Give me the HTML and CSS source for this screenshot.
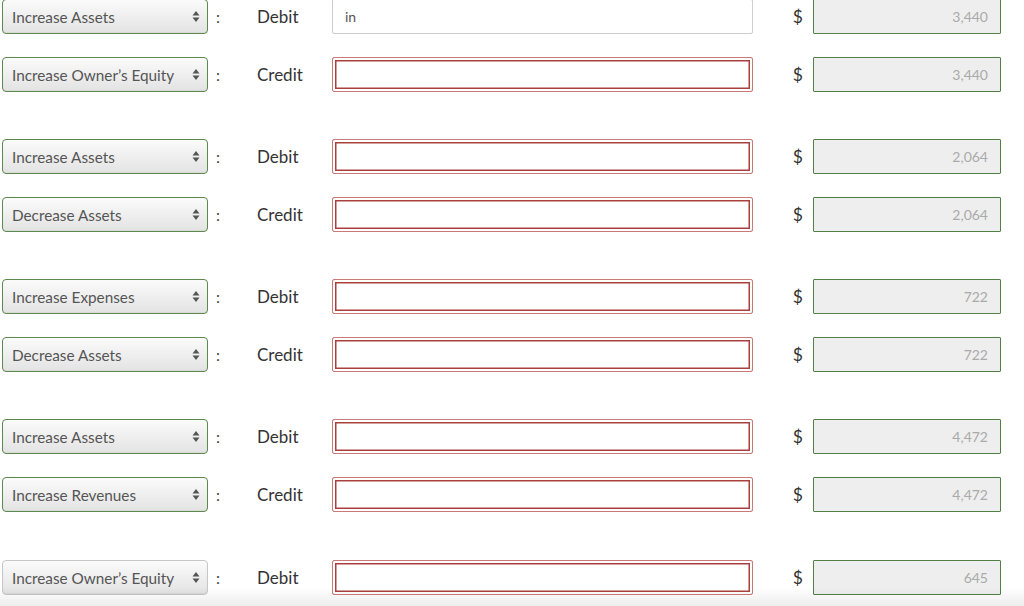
FILE: index.html
```html
<!DOCTYPE html>
<html>
<head>
<meta charset="utf-8">
<link rel="stylesheet" href="styles.css">
</head>
<body>
<div class="sheet">
  <div class="group">
    <div class="row">
      <div class="sel"><span>Increase Assets</span><svg class="arr" width="8" height="13" viewBox="0 0 8 13"><path d="M4 1 L7.5 5.5 H0.5 Z M4 12 L7.5 7.5 H0.5 Z" fill="#555"/></svg></div>
      <div class="colon">:</div>
      <div class="lbl">Debit</div>
      <div class="inp plain">in</div>
      <div class="cur">$</div>
      <div class="amt">3,440</div>
    </div>
    <div class="row">
      <div class="sel"><span>Increase Owner’s Equity</span><svg class="arr" width="8" height="13" viewBox="0 0 8 13"><path d="M4 1 L7.5 5.5 H0.5 Z M4 12 L7.5 7.5 H0.5 Z" fill="#555"/></svg></div>
      <div class="colon">:</div>
      <div class="lbl">Credit</div>
      <div class="inp err"></div>
      <div class="cur">$</div>
      <div class="amt">3,440</div>
    </div>
  </div>
  <div class="group">
    <div class="row">
      <div class="sel"><span>Increase Assets</span><svg class="arr" width="8" height="13" viewBox="0 0 8 13"><path d="M4 1 L7.5 5.5 H0.5 Z M4 12 L7.5 7.5 H0.5 Z" fill="#555"/></svg></div>
      <div class="colon">:</div>
      <div class="lbl">Debit</div>
      <div class="inp err"></div>
      <div class="cur">$</div>
      <div class="amt">2,064</div>
    </div>
    <div class="row">
      <div class="sel"><span>Decrease Assets</span><svg class="arr" width="8" height="13" viewBox="0 0 8 13"><path d="M4 1 L7.5 5.5 H0.5 Z M4 12 L7.5 7.5 H0.5 Z" fill="#555"/></svg></div>
      <div class="colon">:</div>
      <div class="lbl">Credit</div>
      <div class="inp err"></div>
      <div class="cur">$</div>
      <div class="amt">2,064</div>
    </div>
  </div>
  <div class="group">
    <div class="row">
      <div class="sel"><span>Increase Expenses</span><svg class="arr" width="8" height="13" viewBox="0 0 8 13"><path d="M4 1 L7.5 5.5 H0.5 Z M4 12 L7.5 7.5 H0.5 Z" fill="#555"/></svg></div>
      <div class="colon">:</div>
      <div class="lbl">Debit</div>
      <div class="inp err"></div>
      <div class="cur">$</div>
      <div class="amt">722</div>
    </div>
    <div class="row">
      <div class="sel"><span>Decrease Assets</span><svg class="arr" width="8" height="13" viewBox="0 0 8 13"><path d="M4 1 L7.5 5.5 H0.5 Z M4 12 L7.5 7.5 H0.5 Z" fill="#555"/></svg></div>
      <div class="colon">:</div>
      <div class="lbl">Credit</div>
      <div class="inp err"></div>
      <div class="cur">$</div>
      <div class="amt">722</div>
    </div>
  </div>
  <div class="group">
    <div class="row">
      <div class="sel"><span>Increase Assets</span><svg class="arr" width="8" height="13" viewBox="0 0 8 13"><path d="M4 1 L7.5 5.5 H0.5 Z M4 12 L7.5 7.5 H0.5 Z" fill="#555"/></svg></div>
      <div class="colon">:</div>
      <div class="lbl">Debit</div>
      <div class="inp err"></div>
      <div class="cur">$</div>
      <div class="amt">4,472</div>
    </div>
    <div class="row">
      <div class="sel"><span>Increase Revenues</span><svg class="arr" width="8" height="13" viewBox="0 0 8 13"><path d="M4 1 L7.5 5.5 H0.5 Z M4 12 L7.5 7.5 H0.5 Z" fill="#555"/></svg></div>
      <div class="colon">:</div>
      <div class="lbl">Credit</div>
      <div class="inp err"></div>
      <div class="cur">$</div>
      <div class="amt">4,472</div>
    </div>
  </div>
  <div class="group last">
    <div class="row">
      <div class="sel neutral"><span>Increase Owner’s Equity</span><svg class="arr" width="8" height="13" viewBox="0 0 8 13"><path d="M4 1 L7.5 5.5 H0.5 Z M4 12 L7.5 7.5 H0.5 Z" fill="#555"/></svg></div>
      <div class="colon">:</div>
      <div class="lbl">Debit</div>
      <div class="inp err"></div>
      <div class="cur">$</div>
      <div class="amt">645</div>
    </div>
  </div>
</div>
<div class="fade"></div>
</body>
</html>
```

FILE: styles.css
```css
html, body {
  margin: 0;
  padding: 0;
  background: #fff;
  overflow: hidden;
}
body {
  font-family: Lato, "Liberation Sans", sans-serif;
  color: #333;
}
.sheet {
  display: flex;
  flex-direction: column;
  gap: 47px;
  padding-left: 2px;
  margin-top: -1px;
}
.group {
  display: flex;
  flex-direction: column;
  gap: 23px;
}
.group.last {
  margin-top: 1px;
}
.row {
  display: flex;
  align-items: center;
  height: 35px;
}
.sel {
  box-sizing: border-box;
  width: 206px;
  height: 35px;
  border: 1px solid #5b8a4c;
  border-radius: 4px;
  background: linear-gradient(to bottom, #fbfbfb 0%, #f0f0f0 45%, #e3e3e3 100%);
  box-shadow: inset 0 -1px 1px rgba(0,0,0,0.05);
  display: flex;
  align-items: center;
  justify-content: space-between;
  padding: 0 7px 0 9px;
  font-size: 15.3px;
  color: #555;
}
.sel.neutral {
  border-color: #c6c6c6;
}
.arr {
  display: block;
}
.colon {
  width: 49px;
  box-sizing: border-box;
  padding-left: 8px;
  font-size: 16px;
  color: #444;
}
.lbl {
  width: 75px;
  font-size: 17px;
  color: #333;
}
.inp {
  box-sizing: border-box;
  width: 421px;
  height: 35px;
  background: #fff;
}
.inp.plain {
  border: 1px solid #cfcfcf;
  border-radius: 2px;
  padding: 0 12px;
  display: flex;
  align-items: center;
  font-size: 14px;
  color: #555;
}
.inp.err {
  border: 1px solid #c97a78;
  border-radius: 2px;
  box-shadow: inset 0 0 0 2px #fff, inset 0 0 0 3.5px #a9403d;
}
.cur {
  width: 60px;
  box-sizing: border-box;
  text-align: right;
  padding-right: 10px;
  font-size: 17.5px;
  color: #333;
}
.amt {
  box-sizing: border-box;
  width: 188px;
  height: 35px;
  background: #eeeeee;
  border: 1px solid #527f45;
  border-radius: 1px;
  display: flex;
  align-items: center;
  justify-content: flex-end;
  padding-right: 12px;
  font-size: 14px;
  color: #aaa;
}
.fade {
  position: fixed;
  left: 0;
  right: 0;
  bottom: 0;
  height: 18px;
  background: linear-gradient(to bottom, rgba(0,0,0,0), rgba(0,0,0,0.07));
  pointer-events: none;
}
```
